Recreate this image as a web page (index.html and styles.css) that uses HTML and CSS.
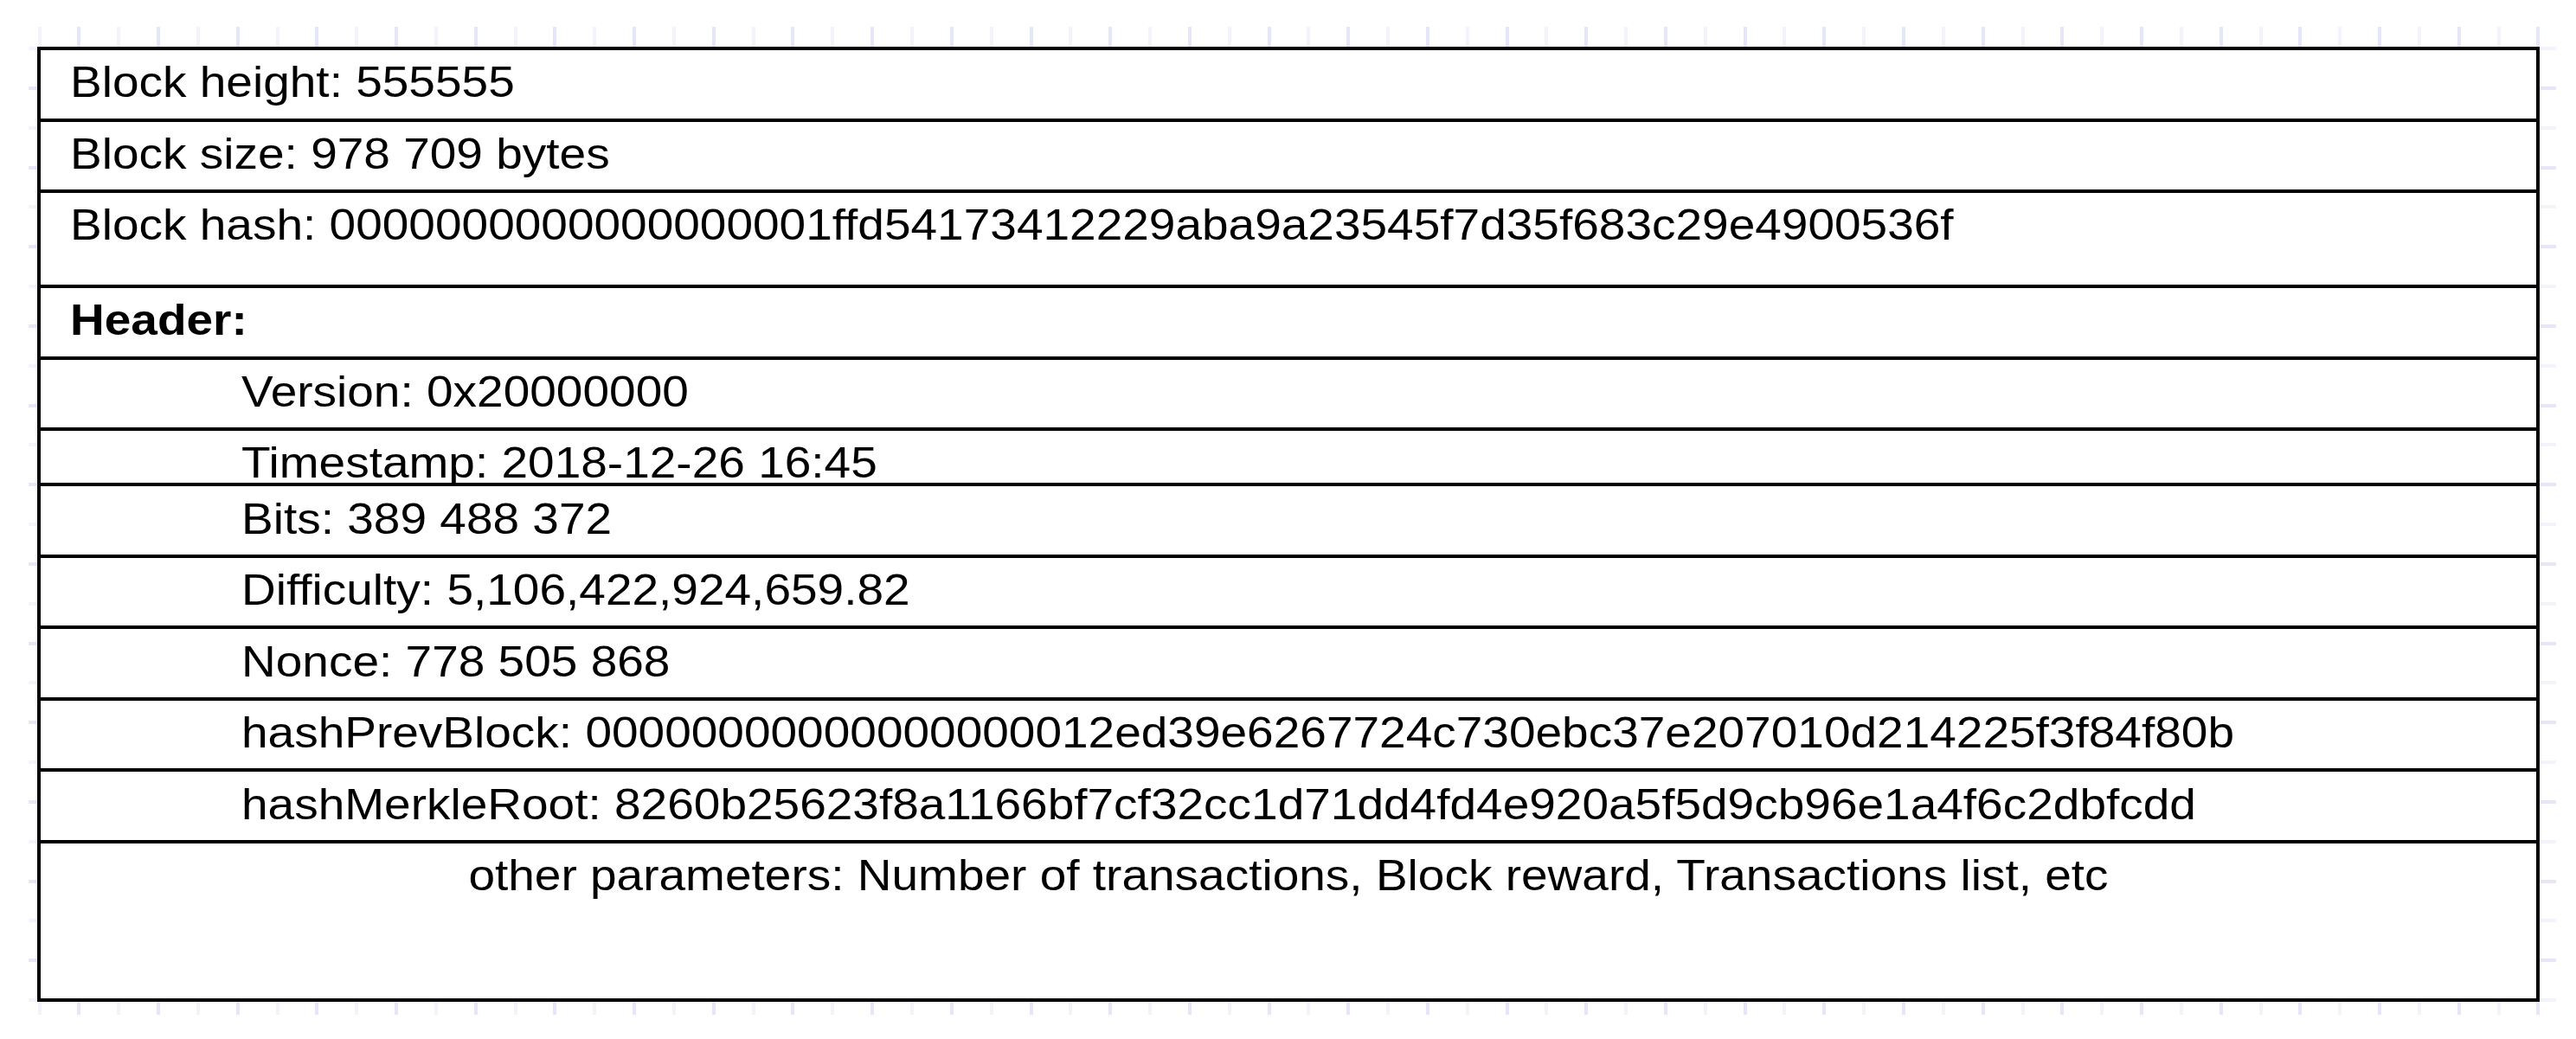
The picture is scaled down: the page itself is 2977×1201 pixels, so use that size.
FILE: index.html
```html
<!DOCTYPE html>
<html lang="en">
<head>
<meta charset="utf-8">
<title>Block 555555</title>
<link rel="stylesheet" href="styles.css">
</head>
<body>
<div class="canvas">
  <div class="block">
    <div class="row row--first"><span class="t">Block height: 555555</span></div>
    <div class="row"><span class="t">Block size: 978 709 bytes</span></div>
    <div class="row row--tall"><span class="t">Block hash: 0000000000000000001ffd54173412229aba9a23545f7d35f683c29e4900536f</span></div>
    <div class="row row--head"><span class="t">Header:</span></div>
    <div class="row row--sub"><span class="t">Version: 0x20000000</span></div>
    <div class="row row--sub row--short"><span class="t">Timestamp: 2018-12-26 16:45</span></div>
    <div class="row row--sub"><span class="t">Bits: 389 488 372</span></div>
    <div class="row row--sub"><span class="t">Difficulty: 5,106,422,924,659.82</span></div>
    <div class="row row--sub"><span class="t">Nonce: 778 505 868</span></div>
    <div class="row row--sub"><span class="t">hashPrevBlock: 00000000000000000012ed39e6267724c730ebc37e207010d214225f3f84f80b</span></div>
    <div class="row row--sub"><span class="t">hashMerkleRoot: 8260b25623f8a1166bf7cf32cc1d71dd4fd4e920a5f5d9cb96e1a4f6c2dbfcdd</span></div>
    <div class="row row--center row--last"><span class="t">other parameters: Number of transactions, Block reward, Transactions list, etc</span></div>
  </div>
</div>
</body>
</html>
```

FILE: styles.css
```css
html, body {
  margin: 0;
  padding: 0;
  background: #ffffff;
}

body {
  font-family: "Liberation Sans", Arial, Helvetica, sans-serif;
  color: #000000;
}

.canvas {
  box-sizing: border-box;
  margin: 31px 0 0 32.5px;
  width: 2921.5px;
  padding: 23px 19px 15px 10.5px;
  background-image:
    repeating-linear-gradient(90deg,
      #f3f3fc 10.5px, #f3f3fc 14.5px,
      transparent 14.5px, transparent 56.34px,
      #e6e6f9 56.34px, #e6e6f9 60.34px,
      transparent 60.34px, transparent 102.18px),
    repeating-linear-gradient(180deg,
      #f3f3fc 23px, #f3f3fc 27px,
      transparent 27px, transparent 68.84px,
      #e6e6f9 68.84px, #e6e6f9 72.84px,
      transparent 72.84px, transparent 114.68px);
}

.block {
  box-sizing: border-box;
  height: 1104px;
  border: 4px solid #000000;
  background: #ffffff;
  display: flex;
  flex-direction: column;
}

.row {
  box-sizing: border-box;
  flex: none;
  height: 82.5px;
  border-top: 4px solid #000000;
  padding: 12.4px 0 0 34px;
  font-size: 55px;
  line-height: 55px;
  white-space: nowrap;
}

.row--first {
  border-top: 0;
  height: 78.5px;
}

.row--tall {
  height: 110px;
}

.row--short {
  height: 64.2px;
}

.row--last {
  flex: 1 1 auto;
  height: auto;
}

.row--head {
  font-weight: bold;
}

.row--sub {
  padding-left: 232px;
}

.row--center {
  padding-left: 0;
  text-align: center;
}

.t {
  display: block;
  transform: scaleY(0.92);
  transform-origin: 0 0;
}
```
